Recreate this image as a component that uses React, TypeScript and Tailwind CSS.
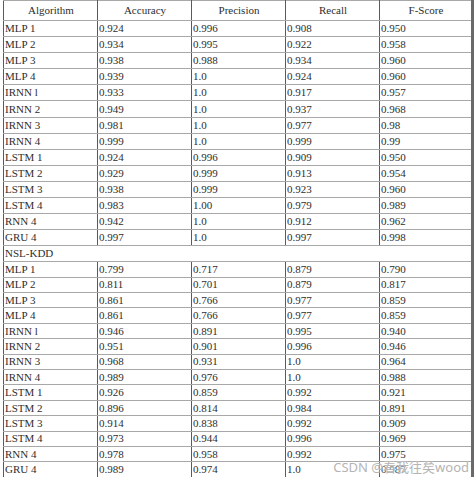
import React from "react";

type Row = [string, string, string, string, string];

const kdd: Row[] = [
  ["MLP 1", "0.924", "0.996", "0.908", "0.950"],
  ["MLP 2", "0.934", "0.995", "0.922", "0.958"],
  ["MLP 3", "0.938", "0.988", "0.934", "0.960"],
  ["MLP 4", "0.939", "1.0", "0.924", "0.960"],
  ["IRNN l", "0.933", "1.0", "0.917", "0.957"],
  ["IRNN 2", "0.949", "1.0", "0.937", "0.968"],
  ["IRNN 3", "0.981", "1.0", "0.977", "0.98"],
  ["IRNN 4", "0.999", "1.0", "0.999", "0.99"],
  ["LSTM 1", "0.924", "0.996", "0.909", "0.950"],
  ["LSTM 2", "0.929", "0.999", "0.913", "0.954"],
  ["LSTM 3", "0.938", "0.999", "0.923", "0.960"],
  ["LSTM 4", "0.983", "1.00", "0.979", "0.989"],
  ["RNN 4", "0.942", "1.0", "0.912", "0.962"],
  ["GRU 4", "0.997", "1.0", "0.997", "0.998"],
];

const nsl: Row[] = [
  ["MLP 1", "0.799", "0.717", "0.879", "0.790"],
  ["MLP 2", "0.811", "0.701", "0.879", "0.817"],
  ["MLP 3", "0.861", "0.766", "0.977", "0.859"],
  ["MLP 4", "0.861", "0.766", "0.977", "0.859"],
  ["IRNN l", "0.946", "0.891", "0.995", "0.940"],
  ["IRNN 2", "0.951", "0.901", "0.996", "0.946"],
  ["IRNN 3", "0.968", "0.931", "1.0", "0.964"],
  ["IRNN 4", "0.989", "0.976", "1.0", "0.988"],
  ["LSTM 1", "0.926", "0.859", "0.992", "0.921"],
  ["LSTM 2", "0.896", "0.814", "0.984", "0.891"],
  ["LSTM 3", "0.914", "0.838", "0.992", "0.909"],
  ["LSTM 4", "0.973", "0.944", "0.996", "0.969"],
  ["RNN 4", "0.978", "0.958", "0.992", "0.975"],
  ["GRU 4", "0.989", "0.974", "1.0", "0.987"],
];

const headers = ["Algorithm", "Accuracy", "Precision", "Recall", "F-Score"];

const cell =
  "border-x border-y border-x-[#5a5a5a] border-y-[#a8a8a8] pl-px align-middle leading-none whitespace-nowrap overflow-hidden";

function DataRow({ row, h }: { row: Row; h: string }) {
  return (
    <tr className={h}>
      {row.map((v, i) => (
        <td key={i} className={cell}>
          {v}
        </td>
      ))}
    </tr>
  );
}

export default function App() {
  return (
    <div className="relative w-[474px] h-[477px] overflow-hidden bg-white">
      <table
        className="ml-[3px] w-[471px] table-fixed border-collapse border-r-[3px] border-r-[#6a6a6a] text-[11px] text-[#2e2e2e]"
        style={{ fontFamily: '"Liberation Serif", "Times New Roman", serif' }}
      >
        <colgroup>
          <col className="w-[94px]" />
          <col className="w-[94px]" />
          <col className="w-[94px]" />
          <col className="w-[94px]" />
          <col />
        </colgroup>
        <thead>
          <tr className="h-[20px]">
            {headers.map((h) => (
              <th key={h} className={cell + " text-center font-normal"}>
                {h}
              </th>
            ))}
          </tr>
        </thead>
        <tbody>
          {kdd.map((r, i) => (
            <DataRow key={"a" + i} row={r} h="h-[16.1px]" />
          ))}
          <tr className="h-[16px]">
            <td colSpan={5} className={cell}>
              NSL-KDD
            </td>
          </tr>
          {nsl.map((r, i) => (
            <DataRow key={"b" + i} row={r} h="h-[15.4px]" />
          ))}
        </tbody>
      </table>
      {/* watermark sits over the last rows, as in the screenshot */}
      <div
        className="absolute right-[5px] bottom-[3px] text-[13px] leading-none text-[#b4b4b4] [text-shadow:0_0_2px_#fff]"
        style={{ fontFamily: '"Noto Sans", "Noto Sans CJK SC", sans-serif' }}
      >
        CSDN @看我往矣wood
      </div>
    </div>
  );
}
